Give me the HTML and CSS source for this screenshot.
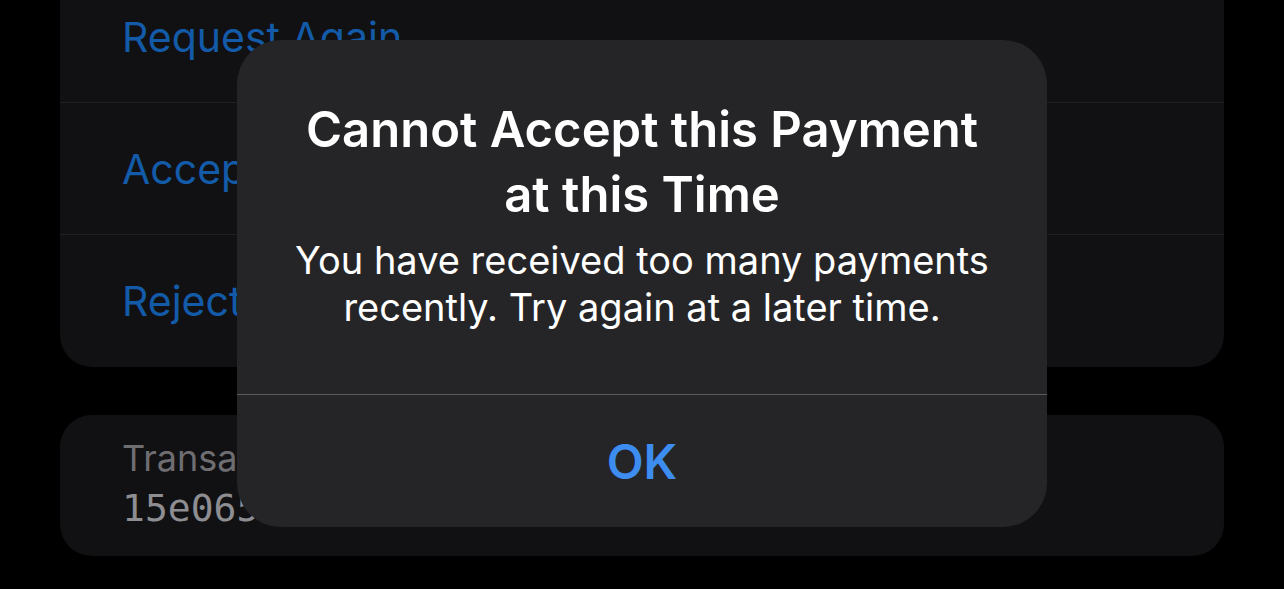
FILE: index.html
```html
<!DOCTYPE html>
<html lang="en">
  <head>
    <meta charset="UTF-8" />
    <meta name="viewport" content="width=device-width, initial-scale=1.0" />
    <title>Payment Request</title>
    <link rel="stylesheet" href="styles.css">
  </head>
  <body>
    <div id="screen">
      <div class="card actionList">
        <div class="actionRow">Request Again</div>
        <div class="actionRow">Accept</div>
        <div class="actionRow">Reject</div>
      </div>

      <div class="card infoCard">
        <div class="infoLabel">Transaction ID</div>
        <div class="infoValue">15e065a8c2d4</div>
      </div>
    </div>

    <div id="alertBox">
      <div class="alertBody">
        <h2 class="alertTitle">Cannot Accept this Payment at this Time</h2>
        <p class="alertMessage">You have received too many payments recently. Try again at a later time.</p>
      </div>
      <div class="alertActions">
        <button class="alertButton">OK</button>
      </div>
    </div>
  </body>
</html>
```

FILE: styles.css
```css
body {
  margin: 0;
  background: #000;
  font-family: "Inter", "Noto Sans", sans-serif;
  overflow: hidden;
}

#screen {
  padding: 0 60px;
}

.card {
  background: #111113;
  border-radius: 32px;
}

.actionList {
  margin-top: -29px;
  padding-bottom: 1px;
}

.actionRow {
  height: 131px;
  display: flex;
  align-items: center;
  padding-left: 62px;
  font-size: 41px;
  color: #135ba8;
}

.actionRow + .actionRow {
  border-top: 1px solid #202022;
}

.infoCard {
  margin-top: 48px;
  height: 141px;
  box-sizing: border-box;
  padding: 21px 62px 0;
  overflow: hidden;
}

.infoLabel {
  font-size: 36px;
  color: #6e6e72;
  line-height: 44px;
}

.infoValue {
  font-family: "DejaVu Sans Mono", "Liberation Mono", monospace;
  font-size: 38px;
  color: #8e8e92;
  line-height: 46px;
  margin-top: 5px;
}

/* alert lies over the page */
#alertBox {
  position: absolute;
  left: 237px;
  top: 40px;
  width: 810px;
  height: 487px;
  background: #252527;
  border-radius: 44px;
  display: flex;
  flex-direction: column;
  overflow: hidden;
}

.alertBody {
  height: 354px;
  box-sizing: border-box;
  padding: 57px 50px 0;
  text-align: center;
  color: #fff;
}

.alertTitle {
  margin: 0;
  font-size: 49px;
  font-weight: 600;
  line-height: 65px;
}

.alertMessage {
  margin: 10px 0 0;
  font-size: 38px;
  line-height: 47px;
}

.alertActions {
  flex: 1;
  border-top: 1px solid #5a5a5d;
  display: flex;
  align-items: center;
  justify-content: center;
}

.alertButton {
  background: none;
  border: none;
  padding: 0;
  font-family: inherit;
  font-size: 48px;
  font-weight: 600;
  color: #3d8cef;
  cursor: pointer;
}
```
